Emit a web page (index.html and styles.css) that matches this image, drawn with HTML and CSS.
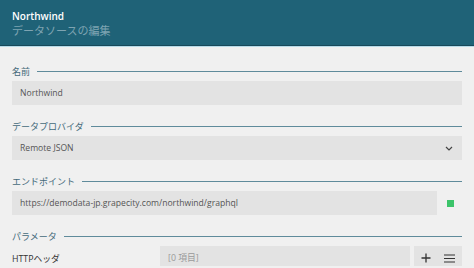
FILE: index.html
```html
<!DOCTYPE html>
<html lang="ja">
  <head>
    <meta charset="UTF-8" />
    <meta name="viewport" content="width=device-width, initial-scale=1.0" />
    <title>データソースの編集</title>
    <link rel="stylesheet" href="styles.css">
  </head>
  <body>
    <div class="header">
      <div class="title">Northwind</div>
      <div class="subtitle">データソースの編集</div>
    </div>

    <div class="content">
      <div class="section">
        <div class="label"><span>名前</span><i class="rule"></i></div>
        <div class="field">Northwind</div>
      </div>

      <div class="section">
        <div class="label"><span>データプロバイダ</span><i class="rule"></i></div>
        <div class="field select">
          <span>Remote JSON</span>
          <svg width="8" height="5" viewBox="0 0 8 5"><path d="M1 1 L4 4 L7 1" fill="none" stroke="#444" stroke-width="1.2"/></svg>
        </div>
      </div>

      <div class="section">
        <div class="label"><span>エンドポイント</span><i class="rule"></i></div>
        <div class="endpoint">
          <div class="field url">https://demodata-jp.grapecity.com/northwind/graphql</div>
          <span class="status"></span>
        </div>
      </div>

      <div class="section">
        <div class="label"><span>パラメータ</span><i class="rule"></i></div>
        <div class="param-row">
          <div class="param-name">HTTPヘッダ</div>
          <div class="param-value">[0 項目]</div>
          <div class="param-buttons">
            <svg width="10" height="10" viewBox="0 0 10 10"><path d="M5 0.5 V9.5 M0.5 5 H9.5" stroke="#333" stroke-width="1.3"/></svg>
            <svg width="11" height="9" viewBox="0 0 11 9"><path d="M0 1 H11 M0 4.5 H11 M0 8 H11" stroke="#333" stroke-width="1.2"/></svg>
          </div>
        </div>
      </div>
    </div>
  </body>
</html>
```

FILE: styles.css
```css
body {
  margin: 0;
  padding: 0;
  background-color: #f0f0f0;
  font-family: "Open Sans", "Noto Sans CJK JP", sans-serif;
  overflow: hidden;
}
.header {
  height: 46px;
  box-sizing: border-box;
  padding: 9px 12px 0;
  background-color: #1f6277;
  border-bottom: 1px solid #18495a;
  box-shadow: 0 1px 0 #b6dbe8;
}
.title {
  color: #fff;
  font-size: 10px;
  font-weight: 600;
  line-height: 14px;
}
.subtitle {
  color: #7ea4b2;
  font-size: 11px;
  line-height: 16px;
}
.content {
  padding: 17px 12px 0;
}
.section {
  margin-bottom: 13px;
}
.label {
  display: flex;
  align-items: center;
  height: 16px;
  margin-bottom: 2px;
  color: #446a7a;
  font-size: 9px;
}
.rule {
  flex: 1;
  height: 1px;
  margin-left: 7px;
  background-color: #5f8b9b;
}
.field {
  height: 24px;
  box-sizing: border-box;
  padding: 0 8px;
  display: flex;
  align-items: center;
  background-color: #e3e3e3;
  color: #555;
  font-size: 8.6px;
}
.select {
  justify-content: space-between;
  padding-right: 9px;
}
.endpoint {
  display: flex;
  align-items: center;
}
.url {
  flex: 1;
}
.status {
  width: 7px;
  height: 7px;
  margin: 0 8px 0 10px;
  background-color: #3cc46a;
}
.param-row {
  display: flex;
  height: 20px;
  margin-top: 1px;
}
.param-name {
  width: 148px;
  font-size: 8.8px;
  color: #333;
  display: flex;
  align-items: center;
  padding-top: 4px;
}
.param-value {
  flex: 1;
  background-color: #e3e3e3;
  color: #999;
  font-size: 8.8px;
  padding: 5px 8px 0;
}
.param-buttons {
  width: 48px;
  margin-left: 4px;
  background-color: #e3e3e3;
  display: flex;
  align-items: center;
  justify-content: space-around;
  padding-top: 4px;
  box-sizing: border-box;
}
```
